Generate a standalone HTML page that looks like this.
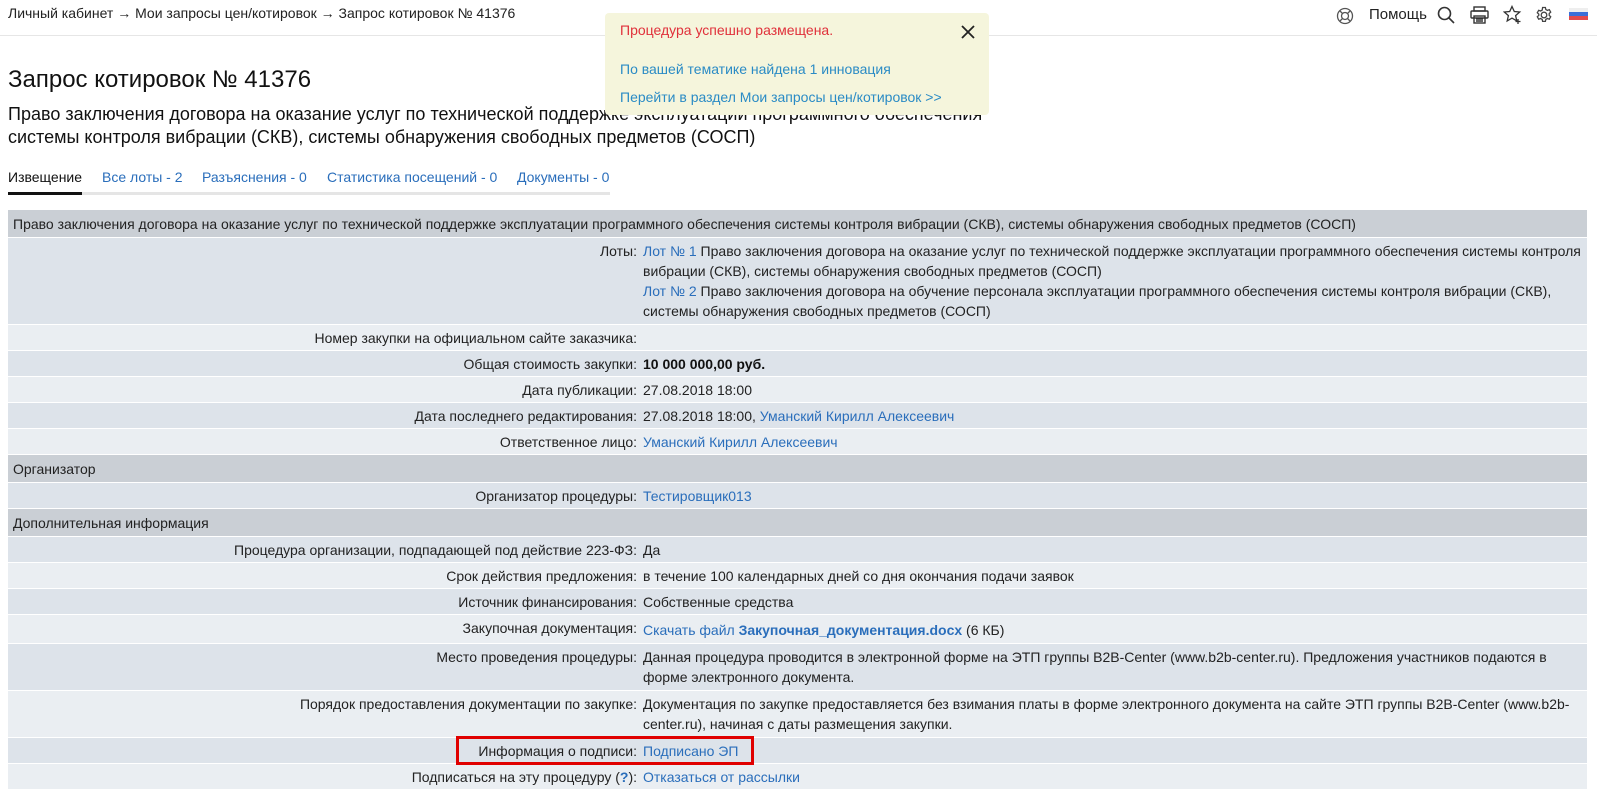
<!DOCTYPE html>
<html><head><meta charset="utf-8">
<style>
*{box-sizing:border-box}
body{margin:0;width:1597px;height:798px;overflow:hidden;background:#fff;font-family:"Liberation Sans",Arial,sans-serif;font-size:14px;color:#222}
a{color:#2a6ebb;text-decoration:none}
.top{position:absolute;left:0;top:0;width:1597px;height:36px;border-bottom:1px solid #e6e6e6}
.bc{position:absolute;left:8px;top:5px;font-size:14px;color:#222}
.ic{position:absolute;top:4px}
h1{position:absolute;left:8px;top:66px;margin:0;font-weight:normal;font-size:24px;color:#111}
.sub{position:absolute;left:8px;top:103px;width:1000px;font-size:18px;line-height:23px;color:#111}
.tabs{position:absolute;left:8px;top:169px;width:602px;height:26px;border-bottom:3px solid #e5e5e5;font-size:14px}
.tabs span{position:absolute;top:0}
.tabs .act{border-bottom:3px solid #111;height:26px;color:#111}
.note{position:absolute;left:605px;top:13px;width:384px;height:102px;background:#f5f5dc;border-radius:4px;font-size:14px}
.note div{position:absolute;left:15px}
table{position:absolute;left:8px;top:209px;width:1579px;border-collapse:collapse}
td{padding:3px 3px 2px;line-height:20px;vertical-align:top;border-top:1px solid #fff}
td.l{width:632px;text-align:right;padding-right:3px;white-space:nowrap}
td.v{padding-left:3px}
tr.h td{background:#cacfd5;padding:4px 5px 3px}
tr.m td{padding:3px 3px 3px}
tr.a td{background:#dde3ea}
tr.b td{background:#eaeef2}
b{color:#111}
.red{position:absolute;left:448px;top:-2px;width:298px;height:29px;border:3px solid #e00000}
</style></head><body>
<div class="top">
<div class="bc">Личный кабинет → Мои запросы цен/котировок → Запрос котировок № 41376</div>
</div>
<svg class="ic" style="left:1336px;top:7px" width="18" height="18" viewBox="0 0 18 18" fill="none" stroke="#555" stroke-width="1.3"><circle cx="9" cy="9" r="7.5"/><circle cx="9" cy="9" r="3.5"/><path d="M4 4l2.5 2.5M14 4l-2.5 2.5M4 14l2.5-2.5M14 14l-2.5-2.5"/></svg>
<div style="position:absolute;left:1369px;top:6px;font-size:15px;color:#222">Помощь</div>
<svg class="ic" style="left:1437px;top:6px" width="18" height="18" viewBox="0 0 18 18" fill="none" stroke="#333" stroke-width="1.6"><circle cx="7.5" cy="7.5" r="6"/><path d="M12 12l5 5"/></svg>
<svg class="ic" style="left:1470px;top:6px" width="19" height="18" viewBox="0 0 19 18" fill="none" stroke="#333" stroke-width="1.4"><rect x="4" y="1" width="11" height="4"/><rect x="1" y="5" width="17" height="7" rx="1"/><rect x="4" y="10" width="11" height="7"/><path d="M6 13h7M6 15h7"/></svg>
<svg class="ic" style="left:1503px;top:5px" width="20" height="20" viewBox="0 0 20 20" fill="none" stroke="#333" stroke-width="1.3"><path d="M9 1.5l2.3 5 5.4.5-4.1 3.6 1.2 5.3L9 13.1 4.2 15.9l1.2-5.3L1.3 7l5.4-.5z"/><path d="M15 14v5M12.5 16.5h5"/></svg>
<svg class="ic" style="left:1535px;top:6px" width="18" height="18" viewBox="0 0 18 18" fill="none" stroke="#444" stroke-width="1.3"><circle cx="9" cy="9" r="2.8"/><path d="M7.6 1.5h2.8l.4 2 1.6.9 1.9-.7 1.4 2.4-1.5 1.4v1.9l1.5 1.4-1.4 2.4-1.9-.7-1.6.9-.4 2H7.6l-.4-2-1.6-.9-1.9.7-1.4-2.4 1.5-1.4V8.1L2.3 6.7l1.4-2.4 1.9.7 1.6-.9z"/></svg>
<div style="position:absolute;left:1569px;top:8px;width:19px;height:12px"><div style="height:4px;background:#eee"></div><div style="height:4px;background:#3b6fd8"></div><div style="height:4px;background:#e34b4b"></div></div>

<h1>Запрос котировок № 41376</h1>
<div class="sub">Право заключения договора на оказание услуг по технической поддержке эксплуатации программного обеспечения<br>системы контроля вибрации (СКВ), системы обнаружения свободных предметов (СОСП)</div>
<div class="tabs">
<span class="act" style="left:0">Извещение</span>
<span style="left:94px"><a>Все лоты - 2</a></span>
<span style="left:194px"><a>Разъяснения - 0</a></span>
<span style="left:319px"><a>Статистика посещений - 0</a></span>
<span style="left:509px"><a>Документы - 0</a></span>
</div>
<div class="note">
<div style="top:9px;color:#e0303a">Процедура успешно размещена.</div>
<div style="top:48px;color:#2a8bc5">По вашей тематике найдена 1 инновация</div>
<div style="top:76px;color:#2a8bc5">Перейти в раздел Мои запросы цен/котировок &gt;&gt;</div>
<svg style="position:absolute;left:356px;top:12px" width="14" height="14" viewBox="0 0 14 14" stroke="#222" stroke-width="1.8"><path d="M1 1l12 12M13 1L1 13"/></svg>
</div>

<table>
<tr class="h"><td colspan="2">Право заключения договора на оказание услуг по технической поддержке эксплуатации программного обеспечения системы контроля вибрации (СКВ), системы обнаружения свободных предметов (СОСП)</td></tr>
<tr class="a m"><td class="l">Лоты:</td><td class="v"><a>Лот № 1</a> Право заключения договора на оказание услуг по технической поддержке эксплуатации программного обеспечения системы контроля вибрации (СКВ), системы обнаружения свободных предметов (СОСП)<br><a>Лот № 2</a> Право заключения договора на обучение персонала эксплуатации программного обеспечения системы контроля вибрации (СКВ), системы обнаружения свободных предметов (СОСП)</td></tr>
<tr class="b"><td class="l">Номер закупки на официальном сайте заказчика:</td><td class="v"></td></tr>
<tr class="a"><td class="l">Общая стоимость закупки:</td><td class="v"><b>10 000 000,00 руб.</b></td></tr>
<tr class="b"><td class="l">Дата публикации:</td><td class="v">27.08.2018 18:00</td></tr>
<tr class="a"><td class="l">Дата последнего редактирования:</td><td class="v">27.08.2018 18:00, <a>Уманский Кирилл Алексеевич</a></td></tr>
<tr class="b"><td class="l">Ответственное лицо:</td><td class="v"><a>Уманский Кирилл Алексеевич</a></td></tr>
<tr class="h"><td colspan="2">Организатор</td></tr>
<tr class="a"><td class="l">Организатор процедуры:</td><td class="v"><a>Тестировщик013</a></td></tr>
<tr class="h"><td colspan="2">Дополнительная информация</td></tr>
<tr class="a"><td class="l">Процедура организации, подпадающей под действие 223-ФЗ:</td><td class="v">Да</td></tr>
<tr class="b"><td class="l">Срок действия предложения:</td><td class="v">в течение 100 календарных дней со дня окончания подачи заявок</td></tr>
<tr class="a"><td class="l">Источник финансирования:</td><td class="v">Собственные средства</td></tr>
<tr class="b"><td class="l">Закупочная документация:</td><td class="v" style="padding-top:5px;padding-bottom:3px"><a>Скачать файл <b style="color:#2a6ebb">Закупочная_документация.docx</b></a> (6 КБ)</td></tr>
<tr class="a m"><td class="l">Место проведения процедуры:</td><td class="v">Данная процедура проводится в электронной форме на ЭТП группы B2B-Center (www.b2b-center.ru). Предложения участников подаются в форме электронного документа.</td></tr>
<tr class="b m"><td class="l">Порядок предоставления документации по закупке:</td><td class="v">Документация по закупке предоставляется без взимания платы в форме электронного документа на сайте ЭТП группы B2B-Center (www.b2b-center.ru), начиная с даты размещения закупки.</td></tr>
<tr class="a"><td class="l" style="position:relative">Информация о подписи:<div class="red"></div></td><td class="v"><a>Подписано ЭП</a></td></tr>
<tr class="b"><td class="l">Подписаться на эту процедуру (<a><b style="color:#2a6ebb">?</b></a>):</td><td class="v"><a>Отказаться от рассылки</a></td></tr>
</table>
</body></html>
